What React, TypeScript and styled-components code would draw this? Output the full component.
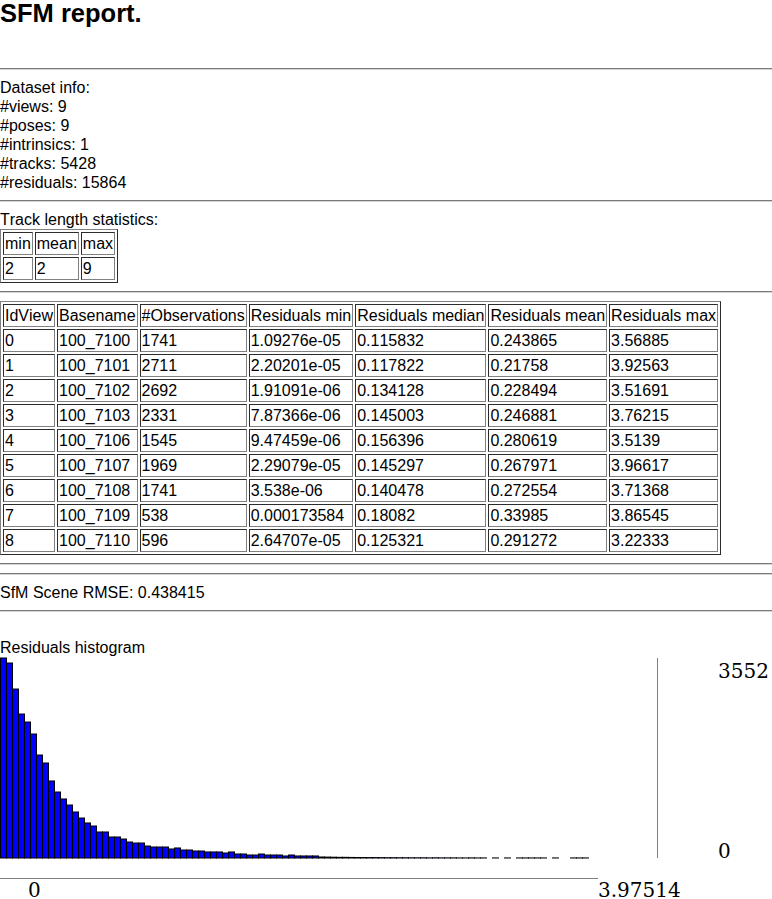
import React from "react";
import styled, { createGlobalStyle } from "styled-components";

const GlobalStyle = createGlobalStyle`
  html, body { margin: 0; padding: 0; background: #ffffff; }
  body {
    font-family: "Liberation Sans", Arial, sans-serif;
    font-size: 16px;
    line-height: 19px;
    color: #000000;
    font-kerning: none;
  }
`;

const Page = styled.div`
  display: block;
`;

const Title = styled.h1`
  margin: 0 0 42px;
  font-size: 25.5px;
  line-height: 26px;
  font-weight: bold;
`;

const Rule = styled.hr`
  margin: 8px 0;
  height: 0;
  border: 0;
  border-top: 1px solid #7a7a7a;
  border-bottom: 1px solid #d4d4d4;
`;

const Block = styled.div<{ $top?: number }>`
  margin-top: ${(p) => (p.$top ? `${p.$top}px` : "0")};
`;

const Line = styled.div`
  height: 19px;
  white-space: nowrap;
`;

const Table = styled.table`
  border: 1px outset #808080;
  border-spacing: 2px;
  font-size: 16px;
  line-height: 19px;
`;

const Cell = styled.td`
  border: 1px inset #808080;
  padding: 1px;
  text-align: left;
  font-weight: normal;
  white-space: nowrap;
`;

const Chart = styled.svg`
  display: block;
  overflow: visible;
`;

const AxisLabel = styled.text`
  font-family: "DejaVu Serif", serif;
  font-size: 20px;
  fill: #000000;
`;

const dataset = [
  "Dataset info:",
  "#views: 9",
  "#poses: 9",
  "#intrinsics: 1",
  "#tracks: 5428",
  "#residuals: 15864",
];

const viewHeader = [
  "IdView",
  "Basename",
  "#Observations",
  "Residuals min",
  "Residuals median",
  "Residuals mean",
  "Residuals max",
];

const views: string[][] = [
  ["0", "100_7100", "1741", "1.09276e-05", "0.115832", "0.243865", "3.56885"],
  ["1", "100_7101", "2711", "2.20201e-05", "0.117822", "0.21758", "3.92563"],
  ["2", "100_7102", "2692", "1.91091e-06", "0.134128", "0.228494", "3.51691"],
  ["3", "100_7103", "2331", "7.87366e-06", "0.145003", "0.246881", "3.76215"],
  ["4", "100_7106", "1545", "9.47459e-06", "0.156396", "0.280619", "3.5139"],
  ["5", "100_7107", "1969", "2.29079e-05", "0.145297", "0.267971", "3.96617"],
  ["6", "100_7108", "1741", "3.538e-06", "0.140478", "0.272554", "3.71368"],
  ["7", "100_7109", "538", "0.000173584", "0.18082", "0.33985", "3.86545"],
  ["8", "100_7110", "596", "2.64707e-05", "0.125321", "0.291272", "3.22333"],
];

const MAX = 3552;
const pxHeights = [
  200, 195, 169, 144, 136, 124, 103, 95, 77, 66, 59, 53, 46, 40, 35, 32, 26, 26,
  21, 21, 19, 16, 15, 15, 12, 11, 11, 11, 9, 10, 8, 8, 7, 7, 6, 6, 6, 5, 6, 4, 4,
  3, 3, 4, 3, 3, 3, 2, 3, 2, 2, 2, 2,
];
const tailCounts = [
  18, 16, 14, 12, 12, 10, 9, 8, 7, 7, 6, 5, 5, 4, 4, 3, 3, 3, 2, 3, 2, 2, 2, 1, 1,
  2, 1, 1, 0, 1, 0, 1, 0, 1, 1, 1, 1, 1, 0, 1, 0, 0, 1, 1, 1, 0, 0,
];
const counts = [
  ...pxHeights.map((h) => Math.round((h * MAX) / 200)),
  ...tailCounts,
].slice(0, 100);

const BAR_W = 6;
const BASE = 201;
const CHART_H = 200;

function Histogram() {
  return (
    <Chart width={772} height={242} viewBox="0 0 772 242">
      {counts.map((c, i) =>
        c > 0 ? (
          <rect
            key={i}
            x={i * BAR_W + 0.5}
            y={BASE - (c / MAX) * CHART_H}
            width={BAR_W}
            height={(c / MAX) * CHART_H}
            fill="#0000ff"
            stroke="#000000"
            strokeWidth={1}
          />
        ) : null
      )}
      <line x1={657.5} y1={1} x2={657.5} y2={201} stroke="#808080" strokeWidth={1} />
      <line x1={0} y1={221.5} x2={598} y2={221.5} stroke="#808080" strokeWidth={1} />
      <AxisLabel x={718} y={21}>3552</AxisLabel>
      <AxisLabel x={718} y={201}>0</AxisLabel>
      <AxisLabel x={28} y={240}>0</AxisLabel>
      <AxisLabel x={598} y={240}>3.97514</AxisLabel>
    </Chart>
  );
}

export default function App() {
  return (
    <Page>
      <GlobalStyle />
      <Title>SFM report.</Title>
      <Rule />
      <Block>
        {dataset.map((l) => (
          <Line key={l}>{l}</Line>
        ))}
      </Block>
      <Rule />
      <Block>
        <Line>Track length statistics:</Line>
        <Table>
          <tbody>
            <tr>
              <Cell>min</Cell>
              <Cell>mean</Cell>
              <Cell>max</Cell>
            </tr>
            <tr>
              <Cell>2</Cell>
              <Cell>2</Cell>
              <Cell>9</Cell>
            </tr>
          </tbody>
        </Table>
      </Block>
      <Rule />
      <Table>
        <tbody>
          <tr>
            {viewHeader.map((h) => (
              <Cell key={h}>{h}</Cell>
            ))}
          </tr>
          {views.map((row) => (
            <tr key={row[0]}>
              {row.map((v, j) => (
                <Cell key={j}>{v}</Cell>
              ))}
            </tr>
          ))}
        </tbody>
      </Table>
      <Rule />
      <Rule />
      <Block>
        <Line>SfM Scene RMSE: 0.438415</Line>
      </Block>
      <Rule />
      <Block $top={26}>
        <Line>Residuals histogram</Line>
        <Histogram />
      </Block>
    </Page>
  );
}
